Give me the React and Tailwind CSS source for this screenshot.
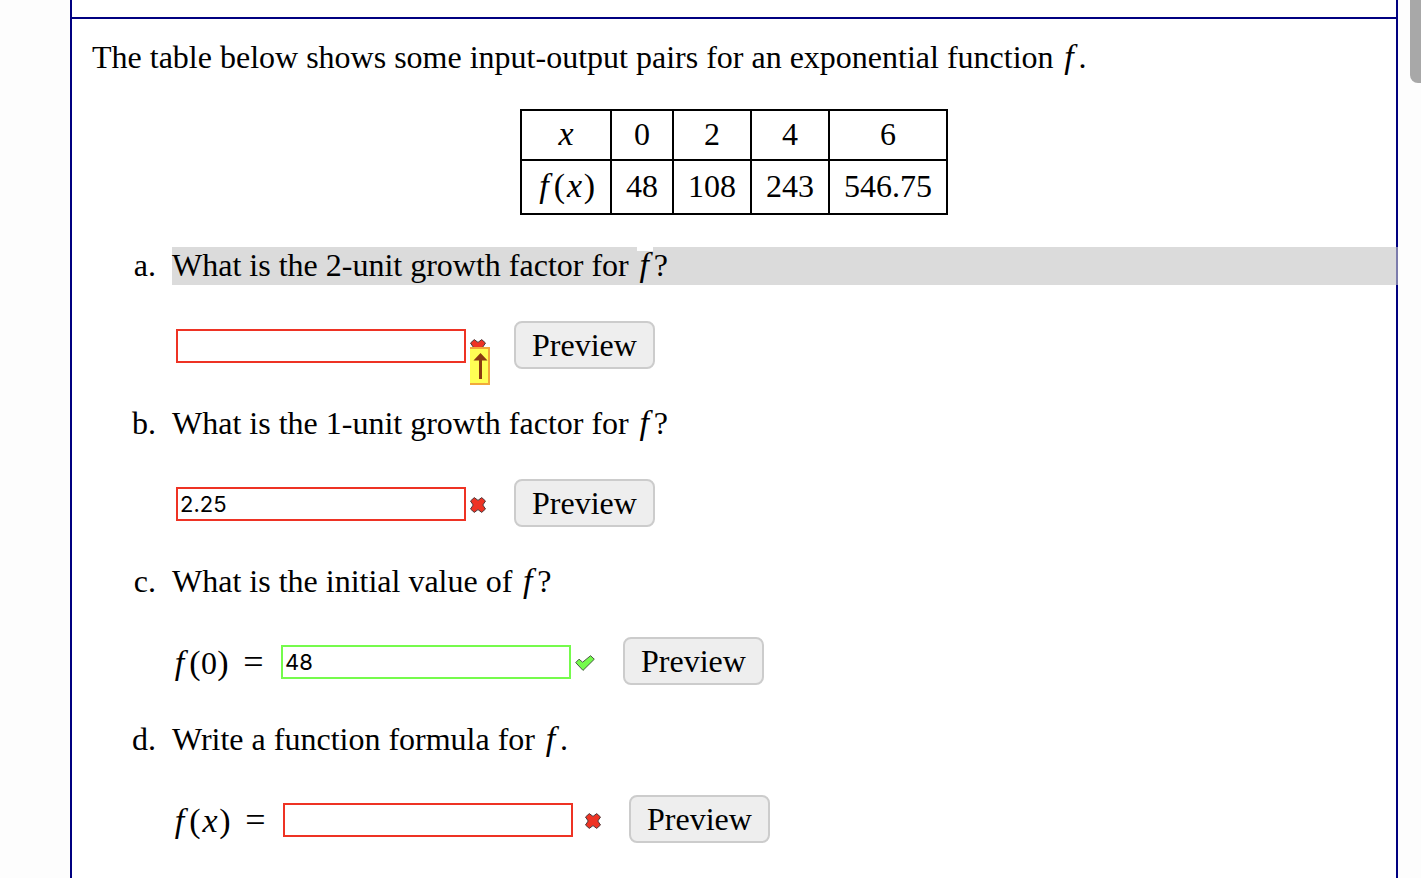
import React, { useState } from 'react';

const pairs = [
  { x: '0', y: '48' },
  { x: '2', y: '108' },
  { x: '4', y: '243' },
  { x: '6', y: '546.75' },
];

function F() {
  return <i className="inline-block w-[17px] pr-0.5 text-center text-[34px] leading-8">f</i>;
}

function X() {
  return <i className="inline-block w-[18px] text-center text-[34px] leading-8">x</i>;
}

function Parens({ children }) {
  return (
    <>
      <span className="inline-block w-3 text-center text-[34px] leading-8">(</span>
      {children}
      <span className="inline-block w-3 text-center text-[34px] leading-8">)</span>
    </>
  );
}

function Equals() {
  return <span className="inline-block w-[25px] ml-3 text-center text-[36px] leading-8">=</span>;
}

function WrongIcon() {
  return (
    <svg viewBox="0 0 16 16" className="w-4 h-4 mt-[18px]" aria-label="Incorrect">
      <path
        d="M4.3 .6 8 3.4 11.7 .6 15.5 4 12.8 8 15.5 12 11.7 15.4 8 12.6 4.3 15.4 .5 12 3.2 8 .5 4Z"
        fill="#ee3324"
        stroke="#4a3a3c"
        strokeWidth="1"
        strokeLinejoin="round"
      />
    </svg>
  );
}

function RightIcon() {
  return (
    <svg viewBox="0 0 20 16" className="w-5 h-4 mt-[18px]" aria-label="Correct">
      <path
        d="M.7 7.6 4 4.2 7.6 7.2 15.6 .7 19.3 4.2 8 15.4Z"
        fill="#75fb4c"
        stroke="#4a5a46"
        strokeWidth="1"
        strokeLinejoin="round"
      />
    </svg>
  );
}

function ArrowTip() {
  return (
    <div className="absolute left-0 top-[26px] w-5 h-[38px] bg-[#ffff54] border-2 border-l-0 border-[#f2a93b]">
      <svg viewBox="0 0 18 34" className="w-[18px] h-[34px]">
        <path d="M10.5 4 17.5 11.5H12V30H9V11.5H3.5Z" fill="#8b3a12" />
      </svg>
    </div>
  );
}

function Answer({ label, name, start = '', correct, tip, wide }) {
  const [value, setValue] = useState(start);

  return (
    <div className="flex items-start mt-9">
      {label && (
        <label htmlFor={name} className="mt-2 whitespace-nowrap">
          {label}
        </label>
      )}
      <input
        id={name}
        type="text"
        aria-label={label ? undefined : `Answer ${name}`}
        value={value}
        onChange={(e) => setValue(e.target.value)}
        className={`mt-2 ml-1 w-[290px] h-[34px] px-0.5 border-2 bg-white font-['Inter',sans-serif] text-[22px] leading-[30px] outline-none ${
          correct ? 'border-[#75fb4c]' : 'border-[#ee3324]'
        }`}
      />
      <div className={`relative ${wide ? 'ml-3' : 'ml-1'}`}>
        {correct ? <RightIcon /> : <WrongIcon />}
        {tip && <ArrowTip />}
      </div>
      <button
        type="button"
        className="ml-7 w-[141px] h-12 rounded-lg border-2 border-[#cccccc] bg-[#eeeeee] text-center"
      >
        Preview
      </button>
    </div>
  );
}

function Part({ letter, children }) {
  return (
    <li className="flex mb-9">
      <span className="w-16 mr-4 text-right">{letter}.</span>
      <div className="flex-1">{children}</div>
    </li>
  );
}

export default function App() {
  return (
    <div className="relative min-h-screen pl-[70px] pr-[23px] bg-[#fdfdfd] overflow-hidden font-['Liberation_Serif',serif] text-[32px] leading-9 text-black">
      <main className="min-h-screen border-x-2 border-[#000080] bg-white pt-[17px]">
        <section className="border-t-2 border-[#000080] pt-5">
          <p className="pl-5 pb-0.5">
            The table below shows some input-output pairs for an exponential function <F />.
          </p>

          <table className="my-8 mx-auto border-collapse text-center">
            <tbody>
              <tr className="h-[50px]">
                <th scope="row" className="w-[90px] pb-0.5 border-2 border-black font-normal">
                  <X />
                </th>
                {pairs.map((p) => (
                  <td key={p.x} className="px-[14px] pb-0.5 border-2 border-black">
                    {p.x}
                  </td>
                ))}
              </tr>
              <tr className="h-[54px]">
                <th scope="row" className="pb-0.5 border-2 border-black font-normal">
                  <F />
                  <Parens>
                    <X />
                  </Parens>
                </th>
                {pairs.map((p) => (
                  <td key={p.x} className="px-[14px] pb-0.5 border-2 border-black">
                    {p.y}
                  </td>
                ))}
              </tr>
            </tbody>
          </table>

          <ol className="pl-5">
            <Part letter="a">
              <p className="-mr-0.5 pb-0.5 bg-[#c6c6c6a0]">
                What is the 2-unit growth factor for{' '}
                <span className="relative">
                  <span className="absolute left-0 top-0 w-4 h-1 bg-white" />
                  <F />
                </span>
                ?
              </p>
              <Answer name="a" tip />
            </Part>
            <Part letter="b">
              <p className="pb-0.5">
                What is the 1-unit growth factor for <F />?
              </p>
              <Answer name="b" start="2.25" />
            </Part>
            <Part letter="c">
              <p className="pb-0.5">
                What is the initial value of <F />?
              </p>
              <Answer
                name="c"
                start="48"
                correct
                label={
                  <span className="block w-[105px]">
                    <F />
                    <Parens>0</Parens>
                    <Equals />
                  </span>
                }
              />
            </Part>
            <Part letter="d">
              <p className="pb-0.5">
                Write a function formula for <F />.
              </p>
              <Answer
                name="d"
                wide
                label={
                  <span className="block w-[107px]">
                    <F />
                    <Parens>
                      <X />
                    </Parens>
                    <Equals />
                  </span>
                }
              />
            </Part>
          </ol>
        </section>
      </main>

      <div className="absolute right-0 top-0 w-[11px] h-[83px] rounded-bl-lg bg-[#a8a8a8]" />
    </div>
  );
}
